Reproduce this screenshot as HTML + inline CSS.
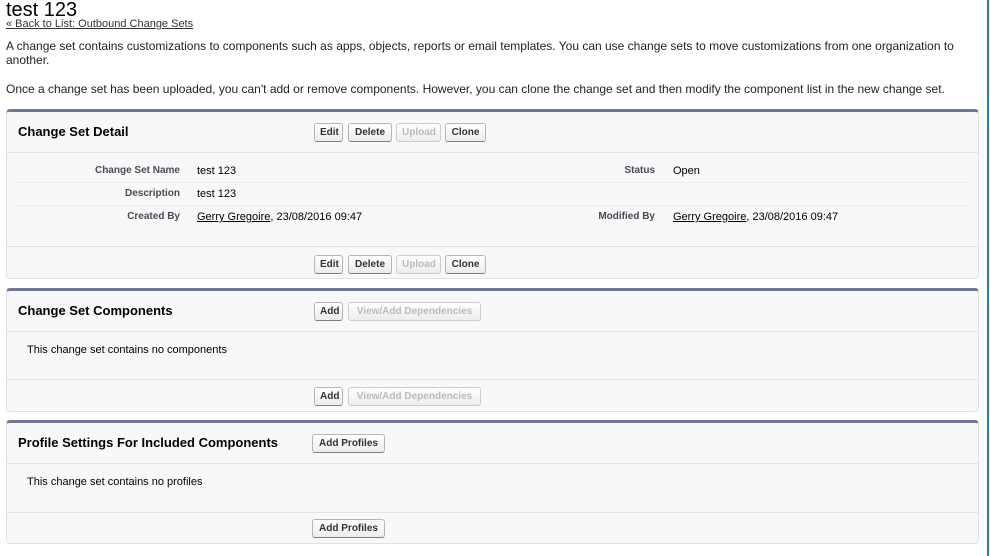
<!DOCTYPE html>
<html><head><meta charset="utf-8"><style>
*{box-sizing:border-box;margin:0;padding:0}
body{width:990px;height:556px;background:#fff;font-family:"Liberation Sans",Arial,sans-serif;color:#222;position:relative;overflow:hidden}
.a{position:absolute;white-space:nowrap}
.blue{position:absolute;left:987px;top:0;width:2px;height:556px;background:#2a7fb0}
.panel{position:absolute;left:6px;width:973px;background:#f8f8f8;border:1px solid #e0e0e0;border-top:3px solid #6f7a92;border-radius:4px}
.hl{position:absolute;left:0;right:0;height:1px;background:#e3e3e3}
.rl{position:absolute;left:10px;right:10px;height:1px;background:#ececec}
.h{font-weight:bold;font-size:13px;color:#000}
.btn{position:absolute;height:19px;border:1px solid #b5b5b5;border-bottom-color:#7f7f7f;border-radius:3px;background:linear-gradient(#fff,#ececec);font-size:10px;font-weight:bold;color:#333;text-align:center;line-height:17px;padding:0 5px}
.dis{color:#bbb;border-color:#ccc}
.lb{font-size:10px;font-weight:bold;color:#4a4a56;text-align:right}
.v{font-size:11px;color:#000}
u{text-decoration:underline}
</style></head><body>
<div class="blue"></div>
<div class="a" style="left:6px;top:-1px;font-size:20px;color:#000">test 123</div>
<div class="a" style="left:6px;top:18px;font-size:11px;color:#333"><u>« Back to List: Outbound Change Sets</u></div>
<div class="a" style="left:6px;top:39px;font-size:12px;line-height:14px;white-space:normal;width:950px">A change set contains customizations to components such as apps, objects, reports or email templates. You can use change sets to move customizations from one organization to another.</div>
<div class="a" style="left:6px;top:82px;font-size:12px">Once a change set has been uploaded, you can't add or remove components. However, you can clone the change set and then modify the component list in the new change set.</div>

<div class="panel" style="top:109px;height:170px">
 <div class="a h" style="left:11px;top:12px">Change Set Detail</div>
 <div class="btn" style="left:307px;top:11px;width:29px">Edit</div>
 <div class="btn" style="left:341px;top:11px;width:44px">Delete</div>
 <div class="btn dis" style="left:389px;top:11px;width:45px">Upload</div>
 <div class="btn" style="left:438px;top:11px;width:41px">Clone</div>
 <div class="hl" style="top:40px"></div>
 <div class="a lb" style="left:0;width:173px;top:53px">Change Set Name</div>
 <div class="a v" style="left:190px;top:53px">test 123</div>
 <div class="a lb" style="left:480px;width:168px;top:53px">Status</div>
 <div class="a v" style="left:666px;top:53px">Open</div>
 <div class="rl" style="top:70px"></div>
 <div class="a lb" style="left:0;width:173px;top:76px">Description</div>
 <div class="a v" style="left:190px;top:76px">test 123</div>
 <div class="rl" style="top:93px"></div>
 <div class="a lb" style="left:0;width:173px;top:99px">Created By</div>
 <div class="a v" style="left:190px;top:99px"><u>Gerry Gregoire</u>, 23/08/2016 09:47</div>
 <div class="a lb" style="left:480px;width:168px;top:99px">Modified By</div>
 <div class="a v" style="left:666px;top:99px"><u>Gerry Gregoire</u>, 23/08/2016 09:47</div>
 <div class="hl" style="top:134px"></div>
 <div class="btn" style="left:307px;top:143px;width:29px">Edit</div>
 <div class="btn" style="left:341px;top:143px;width:44px">Delete</div>
 <div class="btn dis" style="left:389px;top:143px;width:45px">Upload</div>
 <div class="btn" style="left:438px;top:143px;width:41px">Clone</div>
</div>

<div class="panel" style="top:288px;height:124px">
 <div class="a h" style="left:11px;top:12px">Change Set Components</div>
 <div class="btn" style="left:307px;top:11px;width:29px">Add</div>
 <div class="btn dis" style="left:341px;top:11px;width:133px">View/Add Dependencies</div>
 <div class="hl" style="top:40px"></div>
 <div class="a v" style="left:20px;top:53px">This change set contains no components</div>
 <div class="hl" style="top:88px"></div>
 <div class="btn" style="left:307px;top:96px;width:29px">Add</div>
 <div class="btn dis" style="left:341px;top:96px;width:133px">View/Add Dependencies</div>
</div>

<div class="panel" style="top:420px;height:124px">
 <div class="a h" style="left:11px;top:12px">Profile Settings For Included Components</div>
 <div class="btn" style="left:305px;top:11px;width:73px">Add Profiles</div>
 <div class="hl" style="top:40px"></div>
 <div class="a v" style="left:20px;top:53px">This change set contains no profiles</div>
 <div class="hl" style="top:89px"></div>
 <div class="btn" style="left:305px;top:96px;width:73px">Add Profiles</div>
</div>
</body></html>
